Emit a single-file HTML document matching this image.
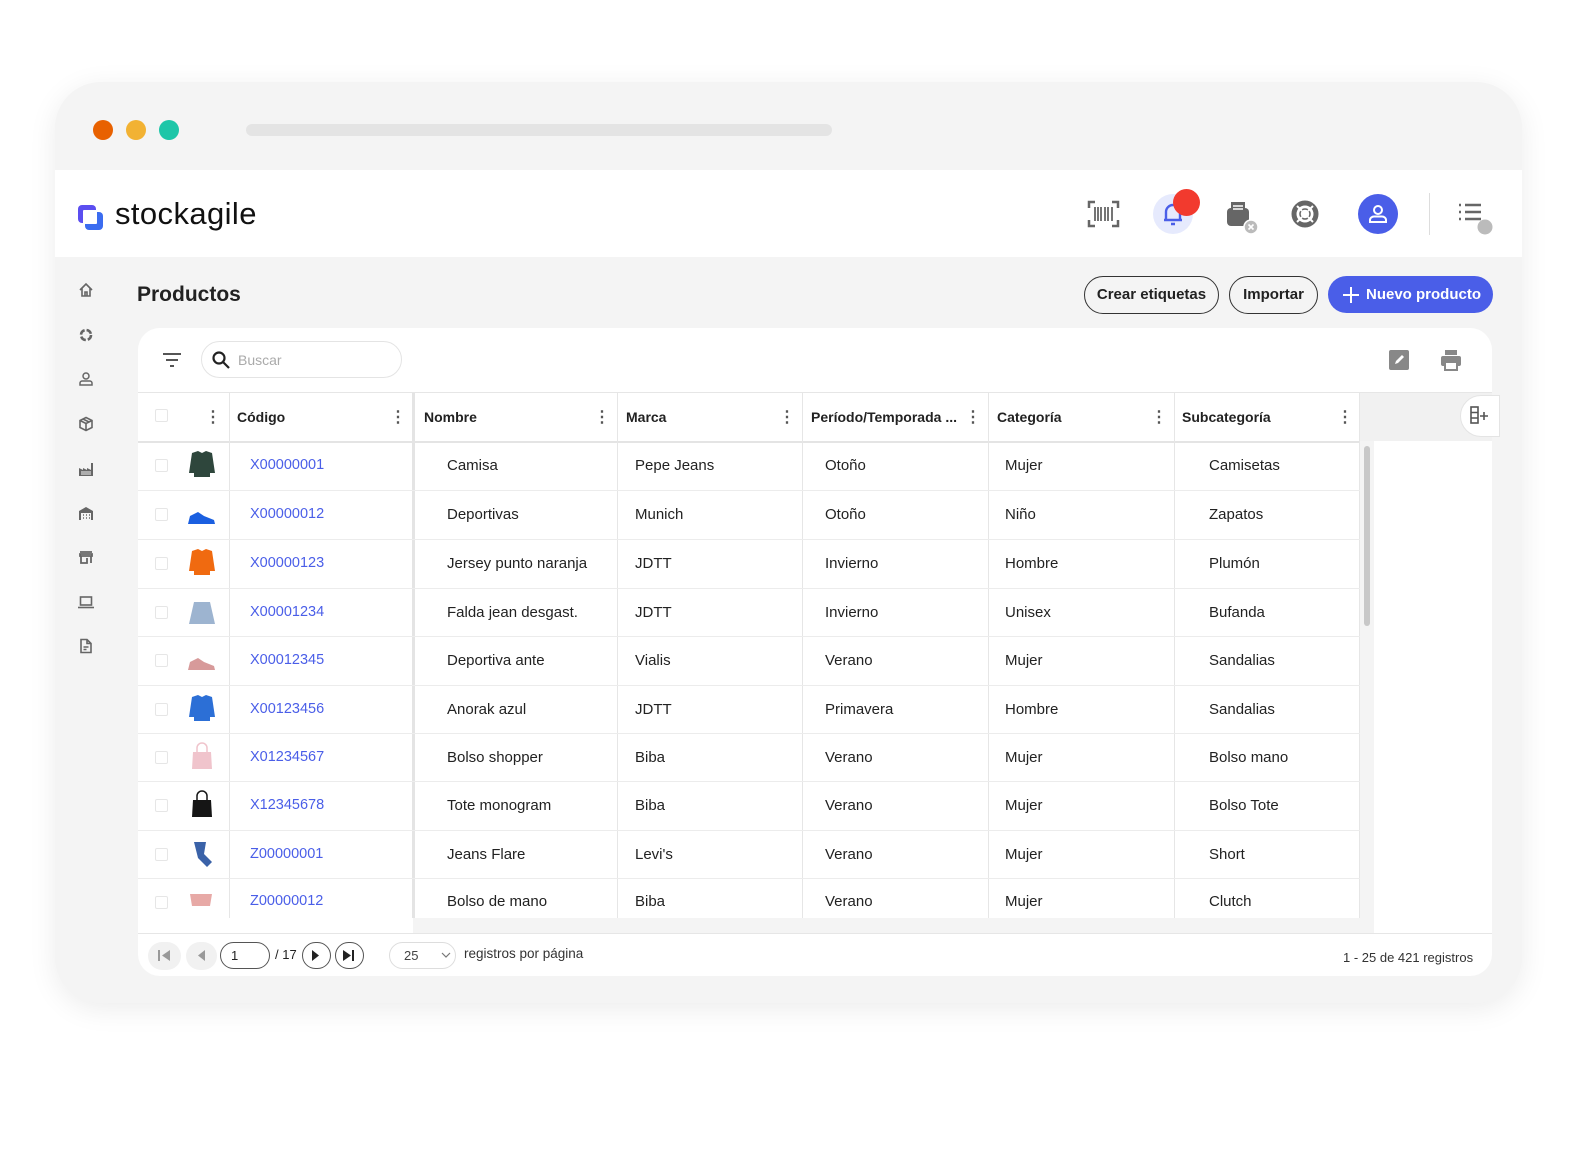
<!DOCTYPE html>
<html><head><meta charset="utf-8"><style>
*{box-sizing:border-box;margin:0;padding:0}
body{width:1578px;height:1168px;background:#fff;font-family:"Liberation Sans",sans-serif;position:relative;overflow:hidden;color:#222}
.abs{position:absolute}
.win{left:55px;top:82px;width:1467px;height:921px;background:#f4f4f4;border-radius:46px;box-shadow:0 6px 28px rgba(0,0,0,.08);overflow:hidden}
.dot{width:20px;height:20px;border-radius:50%;top:120px}
.hdr{left:55px;top:170px;width:1467px;height:87px;background:#fff}
.btn{border:1.5px solid #333;border-radius:20px;height:38px;top:276px;font-size:15px;font-weight:bold;line-height:35px;text-align:center;color:#222}
.card{left:138px;top:328px;width:1354px;height:648px;background:#fff;border-radius:22px;overflow:hidden}
.th{top:393px;height:48px;font-size:14px;font-weight:bold;color:#222;line-height:48px}
.cell{font-size:15px;color:#222}
.vl{width:1px;background:#e6e6e6}
.hl{height:1px;background:#ececec}
.kebab{font-size:16px;color:#555;font-weight:bold}
.cb{width:13px;height:13px;border:1.5px solid #e6e6e6;border-radius:2px}
.code{color:#4a5ee8;font-size:14.5px}
.si{left:78px;width:16px;height:16px}
</style></head><body>
<div class="abs win"></div>
<div class="abs dot" style="left:93px;background:#e86100"></div>
<div class="abs dot" style="left:126px;background:#f2b233"></div>
<div class="abs dot" style="left:159px;background:#1dc6a8"></div>
<div class="abs" style="left:246px;top:124px;width:586px;height:12px;border-radius:6px;background:#e4e4e4"></div>
<div class="abs hdr"></div>
<svg class="abs" style="left:77px;top:204px" width="28" height="28" viewBox="0 0 28 28"><rect x="1" y="1" width="18" height="18" rx="4" fill="#5b4ef0"/><rect x="8" y="8" width="18" height="18" rx="4" fill="#3b6cf0"/><rect x="6" y="6" width="14" height="14" rx="1" fill="#fff"/></svg>
<div class="abs" style="left:115px;top:196px;font-size:31px;color:#111;letter-spacing:.4px">stockagile</div>
<svg class="abs" style="left:1087px;top:200px" width="33" height="28" viewBox="0 0 33 28" fill="none" stroke="#666" stroke-width="2.5"><path d="M2 8V2h6M25 2h6v6M31 20v6h-6M8 26H2v-6"/><path d="M8 7v14M11 7v14M14 7v14M18 7v14M21 7v14M25 7v14" stroke-width="1.8"/></svg>
<div class="abs" style="left:1153px;top:194px;width:40px;height:40px;border-radius:50%;background:#e6eafd"></div>
<svg class="abs" style="left:1162px;top:201px" width="22" height="26" viewBox="0 0 22 26" fill="none" stroke="#4a5ee8" stroke-width="2.4"><path d="M4 19V11a7 7 0 0 1 14 0v8H2h18M9 23h4"/></svg>
<div class="abs" style="left:1173px;top:189px;width:27px;height:27px;border-radius:50%;background:#f23a2e"></div>
<svg class="abs" style="left:1225px;top:200px" width="34" height="34" viewBox="0 0 34 34"><rect x="2" y="8" width="22" height="18" rx="4" fill="#666"/><rect x="6" y="2" width="14" height="10" fill="#666"/><path d="M8 6h10M8 9h10" stroke="#fff" stroke-width="1.5"/><circle cx="26" cy="27" r="7" fill="#bbb" stroke="#fff" stroke-width="1.5"/><path d="M23.5 24.5l5 5M28.5 24.5l-5 5" stroke="#fff" stroke-width="1.6"/></svg>
<svg class="abs" style="left:1291px;top:200px" width="28" height="28" viewBox="0 0 28 28"><circle cx="14" cy="14" r="11" fill="none" stroke="#666" stroke-width="5"/><circle cx="14" cy="14" r="5" fill="none" stroke="#666" stroke-width="1.5"/><path d="M6 6l5 5M22 6l-5 5M6 22l5-5M22 22l-5-5" stroke="#fff" stroke-width="2"/></svg>
<div class="abs" style="left:1358px;top:194px;width:40px;height:40px;border-radius:50%;background:#4a5ee8"></div>
<svg class="abs" style="left:1366px;top:202px" width="24" height="24" viewBox="0 0 24 24" fill="none" stroke="#fff" stroke-width="2"><circle cx="12" cy="8" r="4"/><path d="M4 20v-2c0-2 2-3.5 4-3.5h8c2 0 4 1.5 4 3.5v2z"/></svg>
<div class="abs" style="left:1429px;top:193px;width:1px;height:42px;background:#ddd"></div>
<svg class="abs" style="left:1457px;top:202px" width="40" height="36" viewBox="0 0 40 36"><path d="M2 3h2M8 3h16M2 10h2M8 10h16M2 17h2M8 17h16" stroke="#666" stroke-width="2.4"/><circle cx="28" cy="25" r="7.5" fill="#bbb"/></svg>
<svg class="abs si" style="top:282px" viewBox="0 0 16 16" fill="none" stroke="#666" stroke-width="1.6"><path d="M2 8l6-6 6 6M4 6.5V14h8V6.5M7 14v-4h2v4"/></svg>
<svg class="abs si" style="top:327px" viewBox="0 0 16 16" fill="none" stroke="#666" stroke-width="2.6"><circle cx="8" cy="8" r="5" stroke-dasharray="6 2"/></svg>
<svg class="abs si" style="top:371px" viewBox="0 0 16 16" fill="none" stroke="#666" stroke-width="1.5"><circle cx="8" cy="5" r="3"/><path d="M2 14v-2c0-1 1-2 2-2h8c1 0 2 1 2 2v2z"/></svg>
<svg class="abs si" style="top:416px" viewBox="0 0 16 16" fill="none" stroke="#666" stroke-width="1.6"><path d="M8 1.5l6 3v7l-6 3-6-3v-7zM2 4.5l6 3 6-3M8 7.5v7M5 3l6 3"/></svg>
<svg class="abs si" style="top:461px" viewBox="0 0 16 16" fill="#666"><path d="M1 15V7l4 2V7l4 2V7l4 2V2h2v13z"/><path d="M3 11h10M3 13h10" stroke="#f4f4f4" stroke-width="1"/></svg>
<svg class="abs si" style="top:505px" viewBox="0 0 16 16" fill="#666"><path d="M1 15V6l7-4 7 4v9h-2V8H3v7z"/><path d="M5 10h1M8 10h1M11 10h1M5 13h1M8 13h1M11 13h1" stroke="#666" stroke-width="1.5"/></svg>
<svg class="abs si" style="top:549px" viewBox="0 0 16 16" fill="none" stroke="#666" stroke-width="1.8"><path d="M2 3h12M2 7h12V5H2zM3 7v7h6v-5M13 7v7"/></svg>
<svg class="abs si" style="top:594px" viewBox="0 0 16 16" fill="none" stroke="#666" stroke-width="1.6"><rect x="2.5" y="3" width="11" height="8"/><path d="M0 13.5h16"/></svg>
<svg class="abs si" style="top:638px" viewBox="0 0 16 16" fill="none" stroke="#666" stroke-width="1.6"><path d="M3 1.5h6l4 4v9H3zM9 1.5v4h4M5.5 9h5M5.5 11.5h3"/></svg>
<div class="abs" style="left:137px;top:283px;font-size:21px;font-weight:bold;color:#222">Productos</div>
<div class="abs btn" style="left:1084px;width:135px">Crear etiquetas</div>
<div class="abs btn" style="left:1229px;width:89px">Importar</div>
<div class="abs" style="left:1328px;top:276px;width:165px;height:37px;border-radius:19px;background:#4a5ee8;color:#fff;font-size:15px;font-weight:bold;line-height:37px;padding-left:38px">Nuevo producto</div>
<svg class="abs" style="left:1341px;top:285px" width="20" height="20" viewBox="0 0 20 20" stroke="#fff" stroke-width="2"><path d="M10 2v16M2 10h16"/></svg>
<div class="abs card"></div>
<svg class="abs" style="left:162px;top:352px" width="20" height="16" viewBox="0 0 20 16" stroke="#555" stroke-width="2"><path d="M1 2h18M4 8h12M8 14h4"/></svg>
<div class="abs" style="left:201px;top:341px;width:201px;height:37px;border:1px solid #e4e4e4;border-radius:19px"></div>
<svg class="abs" style="left:211px;top:350px" width="20" height="20" viewBox="0 0 20 20" fill="none" stroke="#222" stroke-width="2.2"><circle cx="8" cy="8" r="5.5"/><path d="M12 12l6 6"/></svg>
<div class="abs" style="left:238px;top:352px;font-size:14px;color:#aaa">Buscar</div>
<svg class="abs" style="left:1389px;top:350px" width="20" height="20" viewBox="0 0 20 20"><rect width="20" height="20" rx="2" fill="#888"/><path d="M6 14l1-3 6-6 2 2-6 6z" fill="#fff"/></svg>
<svg class="abs" style="left:1440px;top:349px" width="22" height="22" viewBox="0 0 22 22" fill="#888"><rect x="5" y="1" width="12" height="5"/><rect x="1" y="7" width="20" height="10" rx="2"/><rect x="5" y="13" width="12" height="8" fill="#fff" stroke="#888" stroke-width="2"/></svg>
<div class="abs" style="left:138px;top:392px;width:1354px;height:1px;background:#e6e6e6"></div>
<div class="abs" style="left:1360px;top:393px;width:132px;height:48px;background:#f1f1f1"></div>
<div class="abs" style="left:1460px;top:395px;width:40px;height:42px;border-radius:21px 0 0 21px;background:#fff;border:1px solid #e4e4e4"></div>
<svg class="abs" style="left:1470px;top:406px" width="20" height="18" viewBox="0 0 20 18" fill="none" stroke="#555" stroke-width="1.6"><rect x="1" y="1" width="7" height="16"/><path d="M1 6.5h7M1 12h7M14 6v8M10 10h8"/></svg>
<div class="abs" style="left:1360px;top:441px;width:14px;height:477px;background:#f4f4f4"></div>
<div class="abs" style="left:1364px;top:446px;width:6px;height:180px;border-radius:3px;background:#c8c8c8"></div>
<div class="abs" style="left:413px;top:918px;width:961px;height:16px;background:#f4f4f4"></div>
<div class="abs" style="left:138px;top:933px;width:1354px;height:1px;background:#e6e6e6"></div>
<div class="abs hl" style="left:138px;top:441px;width:1222px;height:2px;background:#e4e4e4"></div>
<div class="abs cb" style="left:155px;top:409px"></div>
<div class="abs kebab" style="left:205px;top:407px">⋮</div>
<div class="abs th" style="left:237px">Código</div><div class="abs kebab" style="left:390px;top:407px">⋮</div>
<div class="abs th" style="left:424px">Nombre</div><div class="abs kebab" style="left:594px;top:407px">⋮</div>
<div class="abs th" style="left:626px">Marca</div><div class="abs kebab" style="left:779px;top:407px">⋮</div>
<div class="abs th" style="left:811px">Período/Temporada ...</div><div class="abs kebab" style="left:965px;top:407px">⋮</div>
<div class="abs th" style="left:997px">Categoría</div><div class="abs kebab" style="left:1151px;top:407px">⋮</div>
<div class="abs th" style="left:1182px">Subcategoría</div><div class="abs kebab" style="left:1337px;top:407px">⋮</div>
<div class="abs vl" style="left:229px;top:393px;height:525px"></div>
<div class="abs" style="left:412px;top:393px;width:3px;height:525px;background:#e4e4e4"></div>
<div class="abs vl" style="left:617px;top:393px;height:525px"></div>
<div class="abs vl" style="left:802px;top:393px;height:525px"></div>
<div class="abs vl" style="left:988px;top:393px;height:525px"></div>
<div class="abs vl" style="left:1174px;top:393px;height:525px"></div>
<div class="abs vl" style="left:1359px;top:393px;height:525px"></div>
<div id="rows"></div>
<div class="abs" style="left:148px;top:942px;width:33px;height:28px;border-radius:14px;background:#f1f1f1"></div>
<svg class="abs" style="left:157px;top:949px" width="14" height="13" viewBox="0 0 14 13" fill="#999"><rect x="1" y="1" width="2" height="11"/><path d="M13 1v11L5 6.5z"/></svg>
<div class="abs" style="left:186px;top:942px;width:31px;height:28px;border-radius:14px;background:#f1f1f1"></div>
<svg class="abs" style="left:196px;top:949px" width="10" height="13" viewBox="0 0 10 13" fill="#999"><path d="M9 1v11L2 6.5z"/></svg>
<div class="abs" style="left:220px;top:942px;width:50px;height:27px;border:1.3px solid #555;border-radius:14px;font-size:13px;line-height:25px;padding-left:10px">1</div>
<div class="abs" style="left:275px;top:947px;font-size:13px">/ 17</div>
<div class="abs" style="left:302px;top:942px;width:29px;height:27px;border:1.3px solid #555;border-radius:14px"></div>
<svg class="abs" style="left:311px;top:949px" width="10" height="13" viewBox="0 0 10 13" fill="#222"><path d="M1 1v11l7-5.5z"/></svg>
<div class="abs" style="left:335px;top:942px;width:29px;height:27px;border:1.3px solid #555;border-radius:14px"></div>
<svg class="abs" style="left:342px;top:949px" width="14" height="13" viewBox="0 0 14 13" fill="#222"><path d="M1 1v11l8-5.5z"/><rect x="10" y="1" width="2" height="11"/></svg>
<div class="abs" style="left:389px;top:942px;width:67px;height:27px;border:1px solid #ddd;border-radius:14px;font-size:13px;line-height:25px;padding-left:14px;color:#444">25</div>
<svg class="abs" style="left:441px;top:952px" width="10" height="7" viewBox="0 0 10 7" fill="none" stroke="#777" stroke-width="1.2"><path d="M1 1l4 4 4-4"/></svg>
<div class="abs" style="left:464px;top:946px;font-size:13.5px;color:#333">registros por página</div>
<div class="abs" style="left:1343px;top:950px;font-size:13px;color:#333">1 - 25 de 421 registros</div>
<script>
const d=[["X00000001","Camisa","Pepe Jeans","Otoño","Mujer","Camisetas","#2e463c","shirt"],
["X00000012","Deportivas","Munich","Otoño","Niño","Zapatos","#1a5fe0","shoe"],
["X00000123","Jersey punto naranja","JDTT","Invierno","Hombre","Plumón","#f06a10","shirt"],
["X00001234","Falda jean desgast.","JDTT","Invierno","Unisex","Bufanda","#9db4d0","skirt"],
["X00012345","Deportiva ante","Vialis","Verano","Mujer","Sandalias","#d79a9a","shoe"],
["X00123456","Anorak azul","JDTT","Primavera","Hombre","Sandalias","#2c6fd6","shirt"],
["X01234567","Bolso shopper","Biba","Verano","Mujer","Bolso mano","#f0c4cc","bag"],
["X12345678","Tote monogram","Biba","Verano","Mujer","Bolso Tote","#151515","bag"],
["Z00000001","Jeans Flare","Levi's","Verano","Mujer","Short","#3a62a8","jeans"],
["Z00000012","Bolso de mano","Biba","Verano","Mujer","Clutch","#e7a9a6","clutch"]];
const tops=[441,490,539,588,636,685,733,781,830,878];
const shapes={shirt:'<path d="M8 4l6-2 4 2 4-2 6 2 3 20h-5V12v16H10V12v12H5z"/>',
shoe:'<path d="M4 26l2-8 8-4 6 4 10 4 1 4z"/>',
skirt:'<path d="M10 6h16l5 22H5z"/>',
bag:'<path d="M9 11h18l1 17H8z"/><path d="M13 11V7a5 5 0 0 1 10 0v4" fill="none" stroke="COL" stroke-width="1.5"/>',
jeans:'<path d="M10 4h12l-2 12 8 8-5 5-9-9z"/>',
clutch:'<path d="M6 8h22l-2 12H8z"/>'};
let h='';
d.forEach((r,i)=>{const t=tops[i];const ty=t+(i==9?15:16);
h+=`<div class="abs cb" style="left:155px;top:${t+18}px"></div>`;
h+=`<svg class="abs" style="left:184px;top:${t+8}px" width="36" height="32" viewBox="0 0 36 32" fill="${r[6]}">${shapes[r[7]].replace('COL',r[6])}</svg>`;
h+=`<div class="abs code" style="left:250px;top:${ty}px">${r[0]}</div>`;
h+=`<div class="abs cell" style="left:447px;top:${ty}px">${r[1]}</div>`;
h+=`<div class="abs cell" style="left:635px;top:${ty}px">${r[2]}</div>`;
h+=`<div class="abs cell" style="left:825px;top:${ty}px">${r[3]}</div>`;
h+=`<div class="abs cell" style="left:1005px;top:${ty}px">${r[4]}</div>`;
h+=`<div class="abs cell" style="left:1209px;top:${ty}px">${r[5]}</div>`;
if(i<9)h+=`<div class="abs hl" style="left:138px;top:${tops[i+1]}px;width:1222px"></div>`;});
document.getElementById('rows').innerHTML=h;
</script>
</body></html>
